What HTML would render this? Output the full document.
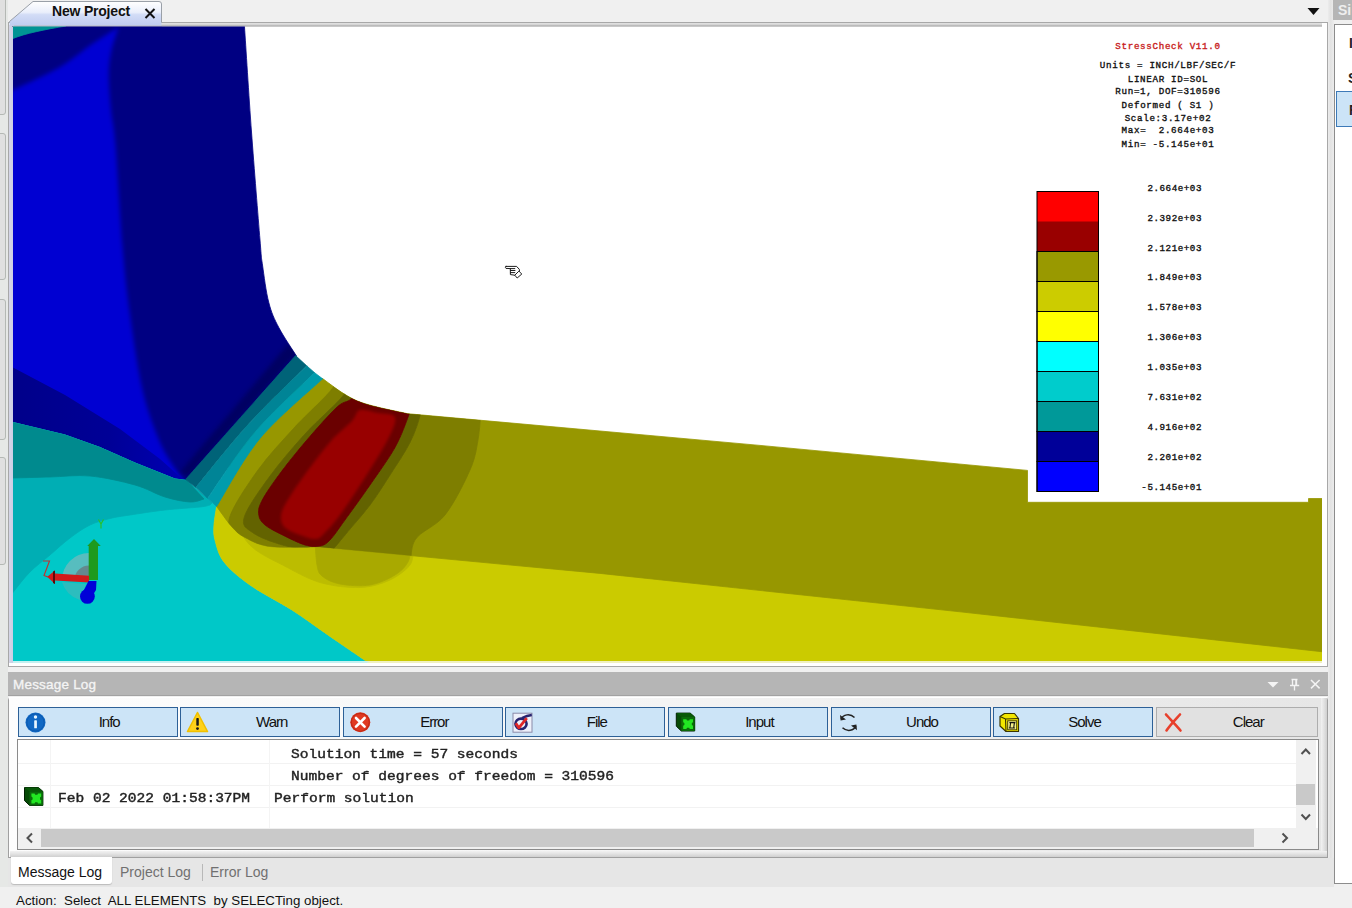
<!DOCTYPE html>
<html lang="en">
<head>
<meta charset="utf-8">
<title>New Project</title>
<style>
*{box-sizing:border-box;margin:0;padding:0}
html,body{width:1352px;height:908px;overflow:hidden;background:#f0f0f0;font-family:"Liberation Sans",sans-serif;}
.abs{position:absolute}
#app{position:relative;width:1352px;height:908px;overflow:hidden;background:#f0f0f0}
/* left strip */
#lstrip{left:0;top:0;width:8px;height:887px;background:#e6e8e6}
.gb{position:absolute;left:-6px;width:11.5px;border:1px solid #b4b8b4;border-radius:3px;background:#e0e0e0}
/* tab */
#tabtxt{left:52px;top:3px;font-size:14px;font-weight:bold;color:#111;letter-spacing:-0.2px;white-space:nowrap}
/* viewport frame */
#vframe{left:8px;top:22px;width:1320px;height:645px;background:#fff;border:1px solid #a8a8a8}
/* message log */
#mlhead{left:8px;top:672px;width:1320px;height:24px;background:#b5b5b5;color:#f4f4f4;font-size:13.5px;line-height:25px;padding-left:5px;letter-spacing:0.2px;-webkit-text-stroke:0.35px #f4f4f4;border-bottom:1px solid #a2a2a2}
#mlpanel{left:8px;top:697px;width:1320px;height:161px;background:linear-gradient(90deg,#fdfdfd,#f4f4f4 50%,#e6e6e6);border:1px solid #a0a0a0;border-top:3px solid #fff}
.tb{position:absolute;top:707px;height:30px;background:#cce4f7;border:1px solid #2d6097;font-size:15px;color:#111;letter-spacing:-1px;text-align:center;line-height:28px;white-space:nowrap}
.tb.off{background:#e1e1e1;border-color:#adadad}
.tb svg{position:absolute;left:-1px;top:0}
.tb span{position:relative;left:11.5px}
#list{left:17px;top:739px;width:1302px;height:111px;background:#fff;border:1px solid #8a8a8a}
.row{position:absolute;left:0;width:1278px;height:1px;background:#f2f2f2}
.col{position:absolute;top:0;width:1px;height:88px;background:#f4f4f4}
.mono{position:absolute;font-family:"Liberation Mono",monospace;font-size:13px;color:#222;white-space:pre;line-height:16px;transform:scaleX(1.119);transform-origin:0 0;-webkit-text-stroke:0.4px #222}
#btabs{left:8px;top:858px;width:1326px;height:29px;background:#e6e6e6}
#status{left:0;top:887px;width:1352px;height:21px;background:#f0f0f0;font-size:13.3px;color:#111;white-space:pre;line-height:27px}
/* right panel */
#rhead{left:1333px;top:0;width:19px;height:20px;background:#b5b5b5;color:#eee;font-size:14px;font-weight:bold;line-height:20px;padding-left:5px;overflow:hidden;white-space:nowrap}
#rpanel{left:1334px;top:24px;width:30px;height:860px;background:#fff;border:1px solid #8c8c8c}
</style>
</head>
<body>
<div id="app">

<!-- left strip with group-box edges -->
<div id="lstrip" class="abs">
  <div class="gb" style="top:-10px;height:125px"></div>
  <div class="gb" style="top:133px;height:147px"></div>
  <div class="gb" style="top:298.5px;height:141px"></div>
  <div class="gb" style="top:457px;height:108px"></div>
</div>

<svg class="abs" style="left:1300px;top:0" width="30" height="22" viewBox="0 0 30 22"><path d="M7.5 8 L19.5 8 L13.5 15 Z" fill="#111"/></svg>

<!-- viewport frame -->
<div id="vframe" class="abs"></div>
<div class="abs" style="left:10px;top:23px;width:1312px;height:3.5px;background:linear-gradient(#e4e4e4,#d0d0d0 50%,#7e7e7e)"></div>
<div class="abs" style="left:9px;top:25px;width:4.5px;height:638px;background:linear-gradient(90deg,#d6d6e6,#c8cce6)"></div>

<!-- document tab -->
<svg class="abs" style="left:0;top:0" width="200" height="26" viewBox="0 0 200 26">
  <defs><linearGradient id="tg" x1="0" y1="0" x2="0" y2="1"><stop offset="0" stop-color="#ffffff"/><stop offset="0.45" stop-color="#eaeffb"/><stop offset="0.55" stop-color="#d2dcf6"/><stop offset="1" stop-color="#c0cdf0"/></linearGradient></defs>
  <path d="M9.5 25.5 L9.5 21.5 L33 1.5 L159 1.5 Q161.5 1.5 161.5 4 L161.5 25.5 Z" fill="url(#tg)"/>
  <path d="M9.5 22.5 L9.5 21.5 L33 1.5 L159 1.5 Q161.5 1.5 161.5 4 L161.5 22.5" fill="none" stroke="#9aa0a8" stroke-width="1"/>
  <path d="M145.5 9 L154.5 18 M154.5 9 L145.5 18" stroke="#111" stroke-width="2" fill="none"/>
</svg>
<div id="tabtxt" class="abs">New Project</div>
<div class="abs" style="left:12px;top:25.5px;width:150px;height:1px;background:#5a6488;opacity:0.75"></div>

<!-- PLOT -->
<svg id="plot" class="abs" style="left:12px;top:26px" width="1310" height="635" viewBox="12 26 1310 635">
  <defs><filter id="soft" x="-2%" y="-2%" width="104%" height="104%"><feGaussianBlur stdDeviation="0.6"/></filter><filter id="soft3" x="-10%" y="-10%" width="120%" height="120%"><feGaussianBlur stdDeviation="1.6"/></filter><filter id="soft2" x="-10%" y="-10%" width="120%" height="120%"><feGaussianBlur stdDeviation="2.2"/></filter></defs>
  <clipPath id="vp"><rect x="13" y="26.5" width="1309" height="634.5"/></clipPath>
  <rect x="13" y="26.5" width="1309" height="634.5" fill="#ffffff"/>
  <g clip-path="url(#vp)"><g id="contours" filter="url(#soft)">
  <path d="M244.5 27.0 C245.7 44.5 248.9 96.5 251.5 132.0 C254.1 167.5 258.2 217.8 260.0 240.0 C261.8 262.2 261.0 254.6 262.5 265.0 C264.0 275.4 266.0 292.1 268.8 302.5 C271.5 312.9 274.1 318.6 278.8 327.5 C283.4 336.4 293.5 351.2 296.5 356.0 L188 478 L186.8 480.5 L186.8 480.5 L175.0 479.0 L135.0 463.0 L100.0 447.5 L65.0 435.0 L13.0 422.5 L0 420 L0 20 L244 20 Z" fill="#000082" stroke="#000082" stroke-width="0.8"/>
  <clipPath id="colclip"><path d="M244.5 27.0 C245.7 44.5 248.9 96.5 251.5 132.0 C254.1 167.5 258.2 217.8 260.0 240.0 C261.8 262.2 261.0 254.6 262.5 265.0 C264.0 275.4 266.0 292.1 268.8 302.5 C271.5 312.9 274.1 318.6 278.8 327.5 C283.4 336.4 293.5 351.2 296.5 356.0 L188 478 L186.8 480.5 L186.8 480.5 L175.0 479.0 L135.0 463.0 L100.0 447.5 L65.0 435.0 L13.0 422.5 L0 420 L0 20 L244 20 Z"/></clipPath>
  <path d="M118.8 27.0 C117.5 30.8 113.2 42.0 111.5 50.0 C109.8 58.0 108.8 65.0 108.8 75.0 C108.7 85.0 109.9 98.3 111.0 110.0 C112.1 121.7 113.6 122.2 115.5 145.0 C117.4 167.8 120.1 218.7 122.5 247.0 C124.9 275.3 126.7 291.2 130.0 315.0 C133.3 338.8 137.7 369.2 142.5 390.0 C147.3 410.8 153.8 427.2 159.0 440.0 C164.2 452.8 170.2 460.8 174.0 467.0 C177.8 473.2 180.7 475.3 182.0 477.0 L184 482 L176.0 482.0 L158.0 466.0 L118.0 436.0 L63.0 402.0 L11.0 374.5 L0 369 L0 96 C2.2 95.0 3.0 94.8 13.0 90.0 C23.0 85.2 46.8 74.7 60.0 67.0 C73.2 59.3 82.2 50.7 92.0 44.0 C101.8 37.3 114.3 29.8 118.8 27.0Z" fill="#0000d2" stroke="#0000d2" stroke-width="0" filter="url(#soft2)"/>
  <g clip-path="url(#colclip)">
  <path d="M298.0 352.0 L188.0 477.0 L180.0 472.0 L288.0 344.0Z" fill="#00005c" stroke="#00005c" stroke-width="0" filter="url(#soft2)" opacity="0.8"/>
  </g>
  <linearGradient id="nbg" gradientUnits="userSpaceOnUse" x1="13" y1="0" x2="186" y2="0"><stop offset="0" stop-color="#00008a"/><stop offset="0.55" stop-color="#000096"/><stop offset="1" stop-color="#0000b4"/></linearGradient>
  <path d="M0 362 L13.0 367.5 L65.0 395.0 L120.0 429.0 L160.0 459.0 L178.0 475.0 L186.8 480.5 L186.8 480.5 L175.0 479.0 L135.0 463.0 L100.0 447.5 L65.0 435.0 L13.0 422.5 L0 420 Z" fill="url(#nbg)"/>
  <path d="M0 20 L70 20 L66 26 C45 29.5 25 33.5 13 38.5 L0 46 Z" fill="#009494" stroke="#009494" stroke-width="0.8"/>
  <path d="M0 420 L13.0 422.5 L65.0 435.0 L100.0 447.5 L135.0 463.0 L175.0 479.0 L186.8 480.5 L216.6 506.4 C216.2 509.5 214.3 519.4 214.0 525.0 C213.7 530.6 213.3 533.8 215.0 540.0 C216.7 546.2 218.2 554.5 224.0 562.0 C229.8 569.5 238.7 577.0 250.0 585.0 C261.3 593.0 279.0 601.7 292.0 610.0 C305.0 618.3 315.7 626.5 328.0 635.0 C340.3 643.5 359.7 656.7 366.0 661.0 L366 670 L0 670 Z" fill="#00c8c8" stroke="#00c8c8" stroke-width="0.8"/>
  <path d="M0 420 L13.0 422.5 L65.0 435.0 L100.0 447.5 L135.0 463.0 L175.0 479.0 L186.8 480.5 L212 503 L210 505 C208.3 505.3 207.5 506.2 200.0 507.0 C192.5 507.8 176.7 508.7 165.0 510.0 C153.3 511.3 139.2 513.6 130.0 515.0 C120.8 516.4 116.7 516.8 110.0 518.5 C103.3 520.2 96.7 521.8 90.0 525.0 C83.3 528.2 76.7 533.0 70.0 538.0 C63.3 543.0 56.7 549.3 50.0 555.0 C43.3 560.7 36.2 565.8 30.0 572.0 C23.8 578.2 18.0 586.2 13.0 592.5 C8.0 598.8 2.2 607.1 0.0 610.0Z" fill="#00aeb4" stroke="#00aeb4" stroke-width="0.8"/>
  <path d="M0 420 L13.0 422.5 L65.0 435.0 L100.0 447.5 L135.0 463.0 L175.0 479.0 L186.8 480.5 L204 499 C201.7 499.5 196.5 502.3 190.0 502.0 C183.5 501.7 174.2 499.8 165.0 497.0 C155.8 494.2 147.5 488.5 135.0 485.0 C122.5 481.5 104.2 477.3 90.0 476.0 C75.8 474.7 62.8 476.7 50.0 477.0 C37.2 477.3 21.3 477.8 13.0 478.0 C4.7 478.2 2.2 478.0 0.0 478.0Z" fill="#008a8e" stroke="#008a8e" stroke-width="0.8"/>
  <path d="M216.6 506.4 L320 500 L1322 600 L1322 670 L366 670 L366 661 C359.7 656.7 340.3 643.5 328.0 635.0 C315.7 626.5 305.0 618.3 292.0 610.0 C279.0 601.7 261.3 593.0 250.0 585.0 C238.7 577.0 229.8 569.5 224.0 562.0 C218.2 554.5 216.7 546.2 215.0 540.0 C213.3 533.8 213.7 530.6 214.0 525.0 C214.3 519.4 216.2 509.5 216.6 506.4Z" fill="#cbcb00" stroke="#cbcb00" stroke-width="0.8"/>
  <path d="M216.6 506.4 C219.7 509.5 229.0 518.1 235.0 525.0 C241.0 531.9 244.6 540.8 252.5 547.5 C260.4 554.2 271.2 559.2 282.5 565.0 C293.8 570.8 307.1 578.8 320.0 582.5 C332.9 586.2 348.3 587.9 360.0 587.5 C371.7 587.1 381.7 583.8 390.0 580.0 C398.3 576.2 406.2 570.0 410.0 565.0 C413.8 560.0 412.5 552.5 413.0 550.0 L320 520 Z" fill="#bcbc00" stroke="#bcbc00" stroke-width="0.8"/>
  <path d="M315 540 C315.3 544.2 315.8 559.0 317.0 565.0 C318.2 571.0 318.2 572.8 322.0 576.0 C325.8 579.2 332.0 582.5 340.0 584.0 C348.0 585.5 360.8 586.5 370.0 585.0 C379.2 583.5 388.7 578.8 395.0 575.0 C401.3 571.2 405.3 567.0 408.0 562.0 C410.7 557.0 410.5 547.8 411.0 545.0Z" fill="#a9a900" stroke="#a9a900" stroke-width="0.8"/>
  <clipPath id="topclip"><path d="M216.6 506.4 L232 455 L300 385 L322.6 378.6 C327.9 382.2 343.2 395.1 357.5 401.0 C371.8 406.9 399.2 411.6 407.5 413.7 L760 445.4 L1027.5 470.4 L1027.5 502.3 L1308.5 502.3 L1308.5 498.5 L1330 498.5 L1330.0 652.6 L960.0 611.8 L600.0 573.4 L508.0 564.8 L320.0 547.0 C311.7 546.9 282.5 548.1 270.0 546.5 C257.5 544.9 251.3 540.8 245.0 537.5 C238.7 534.2 236.7 532.2 232.0 527.0 C227.3 521.8 219.2 509.8 216.6 506.4Z"/></clipPath>
  <path d="M216.6 506.4 L232 455 L300 385 L322.6 378.6 C327.9 382.2 343.2 395.1 357.5 401.0 C371.8 406.9 399.2 411.6 407.5 413.7 L760 445.4 L1027.5 470.4 L1027.5 502.3 L1308.5 502.3 L1308.5 498.5 L1330 498.5 L1330.0 652.6 L960.0 611.8 L600.0 573.4 L508.0 564.8 L320.0 547.0 C311.7 546.9 282.5 548.1 270.0 546.5 C257.5 544.9 251.3 540.8 245.0 537.5 C238.7 534.2 236.7 532.2 232.0 527.0 C227.3 521.8 219.2 509.8 216.6 506.4Z" fill="#979700" stroke="#979700" stroke-width="0.8"/>
  <g clip-path="url(#topclip)">
  <path d="M420 405 L481.0 410.0 C480.5 415.0 479.8 430.0 478.0 440.0 C476.2 450.0 475.5 457.5 470.0 470.0 C464.5 482.5 454.2 503.3 445.0 515.0 C435.8 526.7 420.7 530.8 415.0 540.0 C409.3 549.2 411.7 565.0 411.0 570.0 L320 570 L345 535 L370 505 L390 475 L410 442.5 Z" fill="#7e7e00" stroke="#7e7e00" stroke-width="0.8"/>
  <path d="M328.0 376.0 C328.8 377.9 338.7 378.8 333.0 387.5 C327.3 396.2 306.5 414.2 294.0 428.0 C281.5 441.8 268.8 455.0 258.0 470.0 C247.2 485.0 232.4 507.2 229.4 518.0 C226.4 528.8 233.2 529.9 240.0 535.0 C246.8 540.1 256.7 545.7 270.0 548.5 C283.3 551.3 311.7 551.4 320.0 552.0 L325 560 C328.3 555.8 337.5 544.2 345.0 535.0 C352.5 525.8 362.5 515.0 370.0 505.0 C377.5 495.0 383.3 485.4 390.0 475.0 C396.7 464.6 405.0 452.4 410.0 442.5 C415.0 432.6 418.2 422.7 420.0 415.6 C421.8 408.5 420.8 402.6 421.0 400.0 L340 370 Z" fill="#7e7e00" stroke="#7e7e00" stroke-width="0.8"/>
  <path d="M340.0 384.0 C340.7 385.8 349.8 386.2 344.0 394.5 C338.2 402.8 317.3 420.4 305.0 434.0 C292.7 447.6 280.1 462.2 270.0 476.0 C259.9 489.8 247.2 507.6 244.3 517.0 C241.4 526.4 246.1 527.8 252.5 532.5 C258.9 537.2 271.2 541.8 282.5 545.0 C293.8 548.2 313.8 550.8 320.0 552.0 L325 560 C328.3 555.8 337.5 544.2 345.0 535.0 C352.5 525.8 362.5 515.0 370.0 505.0 C377.5 495.0 383.3 485.4 390.0 475.0 C396.7 464.6 405.0 452.4 410.0 442.5 C415.0 432.6 418.2 422.7 420.0 415.6 C421.8 408.5 420.8 402.6 421.0 400.0 L350 380 Z" fill="#646400" stroke="#646400" stroke-width="0.8"/>
  <path d="M357.0 396.0 C362.2 395.9 371.2 398.5 380.0 400.0 C388.8 401.5 405.2 402.5 410.0 405.0 C414.8 407.5 411.2 407.9 408.8 415.0 C406.2 422.1 401.5 435.8 395.0 447.5 C388.5 459.2 378.3 472.9 370.0 485.0 C361.7 497.1 351.7 510.8 345.0 520.0 C338.3 529.2 334.2 535.7 330.0 540.0 C325.8 544.3 324.2 545.2 320.0 546.0 C315.8 546.8 311.2 546.8 305.0 545.0 C298.8 543.2 289.2 538.3 282.5 535.0 C275.8 531.7 269.0 528.3 265.0 525.0 C261.0 521.7 259.3 518.9 258.8 515.0 C258.2 511.1 258.2 508.1 261.5 501.5 C264.8 494.9 271.1 485.6 278.5 475.5 C285.9 465.4 296.4 452.2 306.0 441.0 C315.6 429.8 328.8 414.8 336.0 408.0 C343.2 401.2 345.5 402.5 349.0 400.5 C352.5 398.5 351.8 396.1 357.0 396.0Z" fill="#6a0000" stroke="#6a0000" stroke-width="0.8"/>
  <path d="M360.0 410.0 C364.3 408.7 372.2 411.8 378.0 413.0 C383.8 414.2 393.4 413.0 395.0 417.5 C396.6 422.0 392.5 430.0 387.5 440.0 C382.5 450.0 372.9 465.0 365.0 477.5 C357.1 490.0 346.7 505.8 340.0 515.0 C333.3 524.2 329.0 528.5 325.0 532.5 C321.0 536.5 320.2 538.6 316.0 539.0 C311.8 539.4 305.2 536.9 300.0 535.0 C294.8 533.1 288.2 530.5 285.0 527.5 C281.8 524.5 280.8 521.1 281.0 517.0 C281.2 512.9 281.8 510.3 286.0 503.0 C290.2 495.7 298.5 483.3 306.0 473.0 C313.5 462.7 323.3 449.7 331.0 441.0 C338.7 432.3 347.2 426.2 352.0 421.0 C356.8 415.8 355.7 411.3 360.0 410.0Z" fill="#980000" stroke="#980000" stroke-width="0" filter="url(#soft3)"/>
  </g>
  <path d="M295.6 355.6 C286.4 365.9 258.9 396.9 240.6 417.5 C222.3 438.1 194.8 469.1 185.6 479.4 L195.8 487.6 C204.5 477.2 229.3 445.4 247.8 425.1 C266.2 404.8 296.9 375.7 306.7 365.8Z" fill="#006478" stroke="#006478" stroke-width="0.8"/>
  <path d="M306.7 365.8 C296.9 375.7 266.2 404.8 247.8 425.1 C229.3 445.4 204.5 477.2 195.8 487.6 L207.6 498.5 C215.4 487.5 236.8 453.6 254.6 432.7 C272.4 411.7 304.6 382.7 314.6 372.7Z" fill="#008496" stroke="#008496" stroke-width="0.8"/>
  <path d="M314.6 372.7 C304.6 382.7 272.4 411.7 254.6 432.7 C236.8 453.6 215.4 487.5 207.6 498.5 L216.6 506.4 C223.8 495.1 242.4 459.6 260.1 438.3 C277.8 417.1 312.2 388.7 322.6 378.8Z" fill="#009cac" stroke="#009cac" stroke-width="0.8"/>
  </g></g>
  <!-- legend -->
  <g id="legend" font-family="'Liberation Mono',monospace" font-size="9.2" letter-spacing="0.68" fill="#111" stroke="#111" stroke-width="0.35">
    <g text-anchor="middle">
      <text x="1168" y="49" fill="#c82020" stroke="#c82020">StressCheck V11.0</text>
      <text x="1168" y="68.2">Units = INCH/LBF/SEC/F</text>
      <text x="1168" y="82.1">LINEAR ID=SOL</text>
      <text x="1168" y="94.4">Run=1, DOF=310596</text>
      <text x="1168" y="108.3">Deformed ( S1 )</text>
      <text x="1168" y="120.5">Scale:3.17e+02</text>
      <text x="1168" y="133.2" xml:space="preserve">Max=  2.664e+03</text>
      <text x="1168" y="147.2">Min= -5.145e+01</text>
    </g>
    <g text-anchor="end" font-size="9.2" letter-spacing="0.55">
      <text x="1202" y="191.2">2.664e+03</text>
      <text x="1202" y="221.2">2.392e+03</text>
      <text x="1202" y="251.0">2.121e+03</text>
      <text x="1202" y="280.2">1.849e+03</text>
      <text x="1202" y="310.0">1.578e+03</text>
      <text x="1202" y="340.0">1.306e+03</text>
      <text x="1202" y="370.0">1.035e+03</text>
      <text x="1202" y="400.0">7.631e+02</text>
      <text x="1202" y="430.0">4.916e+02</text>
      <text x="1202" y="460.0">2.201e+02</text>
      <text x="1202" y="490.0">-5.145e+01</text>
    </g>
    <g stroke="#000" stroke-width="1" letter-spacing="0">
      <rect x="1037" y="191.5" width="61.5" height="30.5" fill="#ff0000" stroke="none"/>
      <rect x="1037" y="221.5" width="61.5" height="30" fill="#990000" stroke="none"/>
      <rect x="1037" y="251.5" width="61.5" height="30" fill="#999900"/>
      <rect x="1037" y="281.5" width="61.5" height="30" fill="#cccc00"/>
      <rect x="1037" y="311.5" width="61.5" height="30" fill="#ffff00"/>
      <rect x="1037" y="341.5" width="61.5" height="30" fill="#00ffff"/>
      <rect x="1037" y="371.5" width="61.5" height="30" fill="#00cccc"/>
      <rect x="1037" y="401.5" width="61.5" height="30" fill="#009999"/>
      <rect x="1037" y="431.5" width="61.5" height="30" fill="#000099"/>
      <rect x="1037" y="461.5" width="61.5" height="30" fill="#0000ff"/>
      <rect x="1037" y="191.5" width="61.5" height="300" fill="none"/>
    </g>
  </g>
  <!-- triad -->
  <g id="triad">
    <path d="M89 580 L89 553 A27 27 0 0 0 62 580 Z" fill="#9fb4b8" opacity="0.55"/>
    <path d="M89 580 L89 565.5 A14.5 14.5 0 0 0 74.5 580 Z" fill="#687c82" opacity="0.8"/>
    <path d="M62 582 A27 27 0 0 0 80 600 L86 584 Z" fill="#7fa8ac" opacity="0.35"/>
    <path d="M88.7 580 L88.7 546 L87.2 546 L94 539 L100.8 546 L98 546 L98 580 Z" fill="#1e9a1e"/>
    <path d="M89 575.8 L55 573.6 L55 570.6 L47.2 576.8 L55 584 L55 580.6 L89 582.6 Z" fill="#d21a1a"/>
    <path d="M55 570.6 L53 571.6 L53 583 L55 584 Z" fill="#5a0a0a"/>
    <circle cx="87.4" cy="596.4" r="7.4" fill="#0000d8"/>
    <path d="M88.5 581 L96.5 581 L96 590 L91 598 L83 592 Z" fill="#0000d8"/>
    <path d="M98.5 519.5 L101 524 L103.5 519.5 M101 524 L101 528.5" stroke="#28c028" stroke-width="1.2" fill="none"/>
    <path d="M43 561 L49.5 561 L44 575.5 L48 577" stroke="#c03030" stroke-width="1.1" fill="none"/>
  </g>
  <!-- cursor -->
  <g id="cursor" stroke="#111" stroke-width="0.95" fill="#fff" stroke-linejoin="round" stroke-linecap="round">
    <path d="M506 266.4 L516.6 266.4 L519.3 269.3 L519.5 271.8 L521.8 274 L517.2 278 L514.8 275.2 L510.4 274.6 L510.3 268.6 L506 268.4 Q504.6 267.4 506 266.4 Z"/>
    <path d="M510.4 268.6 L514.8 268.6 M510.6 270.5 L515 270.5 M510.6 272.6 L514.8 272.6 M514.8 275.2 L518.6 271.4" fill="none"/>
  </g>
</svg>

<div class="abs" style="left:13px;top:661px;width:1309px;height:1.5px;background:linear-gradient(90deg,#c4f0f0 0,#c4f0f0 27%,#f0f0c0 27.2%,#f0f0c0)"></div>
<!-- Message log -->
<div id="mlhead" class="abs">Message Log</div>
<svg class="abs" style="left:1260px;top:672px" width="66" height="24" viewBox="1260 672 66 24">
  <path d="M1267.5 682 L1278.5 682 L1273 687.5 Z" fill="#f4f4f4"/>
  <path d="M1291.5 679.5 L1297.5 679.5 M1292.5 679.5 L1292.5 685.5 M1296.5 679.5 L1296.5 685.5 M1290 685.5 L1299.2 685.5 M1294.5 685.5 L1294.5 690.5" stroke="#f4f4f4" stroke-width="1.3" fill="none"/>
  <rect x="1295.3" y="680" width="1.4" height="5.5" fill="#f4f4f4"/>
  <path d="M1311 680 L1319.6 688.4 M1319.6 680 L1311 688.4" stroke="#f4f4f4" stroke-width="1.5" fill="none"/>
</svg>
<div id="mlpanel" class="abs"></div>
<div class="abs" style="left:10px;top:698px;width:1311px;height:42px;background:linear-gradient(90deg,#fdfdfd,#f4f4f4 50%,#e6e6e6)"></div>
<div class="abs" style="left:1321px;top:698px;width:6px;height:159px;background:linear-gradient(90deg,#f2f2f2,#e2e2e2 50%,#cfcfcf)"></div>
<div class="abs" style="left:10px;top:851px;width:1317px;height:6px;background:linear-gradient(#f2f2f2,#e2e2e2 50%,#cfcfcf)"></div>
<div class="tb" style="left:17.7px;width:160.0px"><svg width="40" height="30" viewBox="0 0 40 30"><circle cx="17.5" cy="14.5" r="10" fill="#1068c4"/><circle cx="17.5" cy="14.5" r="8.6" fill="none" stroke="#0a56a8" stroke-width="0.8"/><rect x="16.2" y="12.3" width="2.7" height="8" rx="0.6" fill="#e8f6ff"/><circle cx="17.5" cy="9" r="1.7" fill="#e8f6ff"/></svg><span>Info</span></div>
<div class="tb" style="left:180.2px;width:160.0px"><svg width="40" height="30" viewBox="0 0 40 30"><path d="M17.5 4.5 L27.5 23.5 L7.5 23.5 Z" fill="#ffd21a" stroke="#f0c000" stroke-width="1.6" stroke-linejoin="round"/><rect x="16.3" y="10" width="2.5" height="7.8" rx="0.8" fill="#1a1a1a"/><circle cx="17.5" cy="20.6" r="1.4" fill="#1a1a1a"/></svg><span>Warn</span></div>
<div class="tb" style="left:342.8px;width:160.0px"><svg width="40" height="30" viewBox="0 0 40 30"><circle cx="17.3" cy="14.3" r="10" fill="#e03a22"/><circle cx="17.3" cy="14.3" r="9" fill="none" stroke="#c42a16" stroke-width="1.2"/><path d="M13 10 L21.6 18.6 M21.6 10 L13 18.6" stroke="#fff" stroke-width="2.6" stroke-linecap="round"/></svg><span>Error</span></div>
<div class="tb" style="left:505.4px;width:160.0px"><svg width="40" height="30" viewBox="0 0 40 30"><rect x="8" y="5.2" width="19" height="19" fill="#eef0fa" stroke="#8a8aa8" stroke-width="1"/><ellipse cx="16" cy="15.8" rx="5.6" ry="5.2" fill="none" stroke="#282470" stroke-width="2.6"/><path d="M17 10.2 C20 8.6 23 7.4 26.8 7" stroke="#282470" stroke-width="2.6" fill="none"/><path d="M10.8 15.3 L13.8 19.8 L21.8 10.2" stroke="#e02626" stroke-width="2.8" fill="none" stroke-linejoin="round"/></svg><span>File</span></div>
<div class="tb" style="left:667.9px;width:160.0px"><svg width="40" height="30" viewBox="0 0 40 30"><g transform="translate(7.8 4.6)"><path d="M0.5 0.5 L14.4 0.5 L18.9 4.4 L18.9 18.4 L5.5 18.4 L0.5 13.6 Z" fill="#064a06" stroke="#022002" stroke-width="1" stroke-linejoin="round"/><path d="M5.5 4.4 L18.9 4.4 L18.9 18.4 L5.5 18.4 Z" fill="#0a6a0a"/><path d="M0.5 0.5 L14.4 0.5 L18.9 4.4 L5.5 4.4 Z" fill="#085808"/><path d="M7.4 6.6 L10.6 6.6 L11.2 7.8 L13.4 7.8 L14 6.6 L17.2 6.6 L17.2 9.6 L16 10.4 L16 12.4 L17.2 13.2 L17.2 16.4 L14 16.4 L13.4 15.2 L11.2 15.2 L10.6 16.4 L7.4 16.4 L7.4 13.2 L8.6 12.4 L8.6 10.4 L7.4 9.6 Z" fill="#22e622"/></g></svg><span>Input</span></div>
<div class="tb" style="left:830.5px;width:160.0px"><svg width="40" height="30" viewBox="0 0 40 30"><path d="M10.2 11 C12 6.5 19 5 23.5 9.5" stroke="#222" stroke-width="1.5" fill="none"/><path d="M9 7 L9.6 12.6 L15 11.6 Z" fill="#222"/><path d="M24.8 18 C23 22.8 16 24 11.5 19.8" stroke="#222" stroke-width="1.5" fill="none"/><path d="M26 22.2 L25.4 16.4 L20 17.6 Z" fill="#222"/></svg><span>Undo</span></div>
<div class="tb" style="left:993.0px;width:160.0px"><svg width="40" height="30" viewBox="0 0 40 30"><path d="M7 8.5 L11.5 5.5 L21.5 5.5 L25.5 10.5 L25.5 23.5 L13 23.5 L7 18 Z" fill="#f2e600" stroke="#3a3400" stroke-width="1.2" stroke-linejoin="round"/><path d="M7 8.5 L12.5 11 L25.5 10.5 M12.5 11 L13 23.5" stroke="#3a3400" stroke-width="1.1" fill="none"/><rect x="14.7" y="12.8" width="9" height="9" fill="#f6f08a" stroke="#3a3400" stroke-width="0.9"/><path d="M17.6 14.6 L16.9 20 M21.4 14.6 L20.7 20 M16.4 14.6 L22.4 14.6 M15.9 20 L21.9 20" stroke="#111" stroke-width="1.1"/></svg><span>Solve</span></div>
<div class="tb off" style="left:1155.6px;width:162.3px"><svg width="40" height="30" viewBox="0 0 40 30"><path d="M10 6.5 C13 10 19 16 24.5 22.5" stroke="#e8402c" stroke-width="2.6" stroke-linecap="round" fill="none"/><path d="M24 6.5 C20 11 15 16 10.5 22.5" stroke="#e8402c" stroke-width="2.6" stroke-linecap="round" fill="none"/></svg><span>Clear</span></div>
<div id="list" class="abs">
  <div class="row" style="top:23px"></div><div class="row" style="top:45px"></div><div class="row" style="top:67px"></div>
  <div class="col" style="left:32px"></div><div class="col" style="left:251px"></div>
  <div class="mono" style="left:273px;top:6.5px">Solution time = 57 seconds</div>
  <div class="mono" style="left:273px;top:28.5px">Number of degrees of freedom = 310596</div>
  <div class="mono" style="left:40px;top:51px">Feb 02 2022 01:58:37PM</div>
  <div class="mono" style="left:256px;top:51px">Perform solution</div>
  <svg class="abs" style="left:6px;top:47px" width="20" height="20" viewBox="0 0 20 20"><path d="M0.5 0.5 L14.4 0.5 L18.9 4.4 L18.9 18.4 L5.5 18.4 L0.5 13.6 Z" fill="#064a06" stroke="#022002" stroke-width="1" stroke-linejoin="round"/><path d="M5.5 4.4 L18.9 4.4 L18.9 18.4 L5.5 18.4 Z" fill="#0a6a0a"/><path d="M0.5 0.5 L14.4 0.5 L18.9 4.4 L5.5 4.4 Z" fill="#085808"/><path d="M7.4 6.6 L10.6 6.6 L11.2 7.8 L13.4 7.8 L14 6.6 L17.2 6.6 L17.2 9.6 L16 10.4 L16 12.4 L17.2 13.2 L17.2 16.4 L14 16.4 L13.4 15.2 L11.2 15.2 L10.6 16.4 L7.4 16.4 L7.4 13.2 L8.6 12.4 L8.6 10.4 L7.4 9.6 Z" fill="#22e622"/></svg>
  <!-- vertical scrollbar -->
  <div class="abs" style="left:1278px;top:0;width:20px;height:88px;background:#f0f0f0"></div>
  <div class="abs" style="left:1278px;top:44px;width:19px;height:21px;background:#c9c9c9"></div>
  <svg class="abs" style="left:1278px;top:0" width="20" height="88" viewBox="0 0 20 88"><path d="M5.5 14 L9.8 9.5 L14 14" stroke="#505050" stroke-width="2" fill="none"/><path d="M5.5 74.5 L9.8 79 L14 74.5" stroke="#505050" stroke-width="2" fill="none"/></svg>
  <!-- horizontal scrollbar -->
  <div class="abs" style="left:0;top:88px;width:1300px;height:21px;background:#f0f0f0"></div>
  <div class="abs" style="left:23px;top:89px;width:1213px;height:18px;background:#c9c9c9"></div>
  <svg class="abs" style="left:0;top:88px" width="1300" height="21" viewBox="0 0 1300 21"><path d="M14 5.5 L9.5 10 L14 14.5" stroke="#505050" stroke-width="2" fill="none"/><path d="M1264.5 5.5 L1269 10 L1264.5 14.5" stroke="#505050" stroke-width="2" fill="none"/></svg>
</div>
<div id="btabs" class="abs">
  <div class="abs" style="left:3px;top:-1px;width:101px;height:27px;background:#fff;border-radius:0 0 3px 3px;box-shadow:0 1px 1px #bbb"></div>
  <div class="abs" style="left:10px;top:6px;font-size:14px;color:#111;white-space:nowrap">Message Log</div>
  <div class="abs" style="left:112px;top:6px;font-size:14px;color:#707070;white-space:nowrap">Project Log</div>
  <div class="abs" style="left:194px;top:6px;width:1px;height:17px;background:#b8b8b8"></div>
  <div class="abs" style="left:202px;top:6px;font-size:14px;color:#707070;white-space:nowrap">Error Log</div>
</div>
<div id="status" class="abs" style="padding-left:2px">    Action:  Select  ALL ELEMENTS  by SELECTing object.</div>

<div class="abs" style="left:1328px;top:0;width:6px;height:858px;background:linear-gradient(90deg,#ececec,#e2e2e2 45%,#ececec)"></div>
<!-- right panel -->
<div id="rhead" class="abs">Si</div>
<div id="rpanel" class="abs">
  <div class="abs" style="left:1px;top:66px;width:30px;height:36px;background:#cce4f7;border:1px solid #3d7ab8"></div>
  <div class="abs" style="left:14px;top:10px;font-size:14px;font-weight:bold;color:#222">I</div>
  <div class="abs" style="left:13px;top:45px;font-size:14px;font-weight:bold;color:#222">S</div>
  <div class="abs" style="left:14px;top:77px;font-size:14px;font-weight:bold;color:#222">F</div>
</div>

</div>
</body>
</html>
